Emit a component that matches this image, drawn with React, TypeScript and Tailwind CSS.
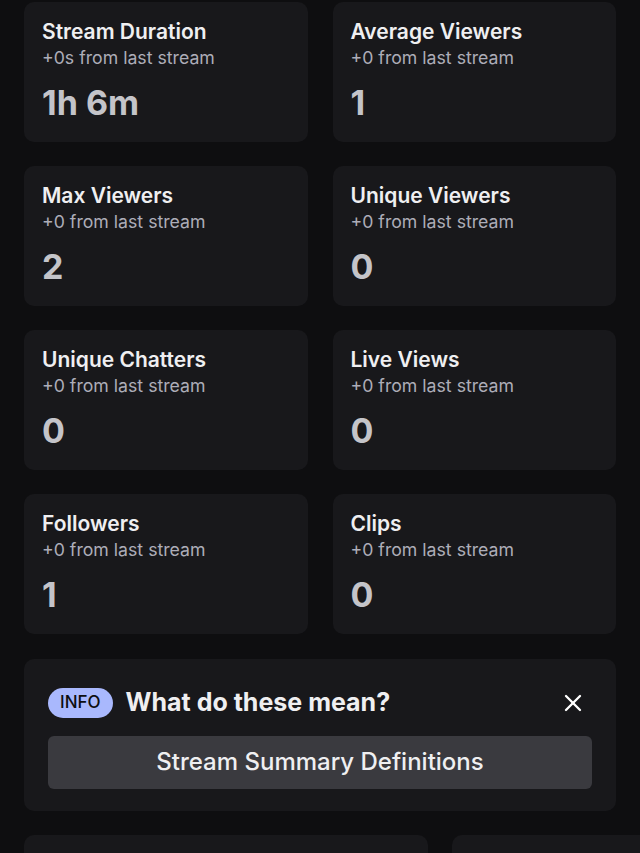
import { X } from "lucide-react";

interface Stat {
  label: string;
  delta: string;
  value: string;
}

const stats: Stat[] = [
  { label: "Stream Duration", delta: "+0s from last stream", value: "1h 6m" },
  { label: "Average Viewers", delta: "+0 from last stream", value: "1" },
  { label: "Max Viewers", delta: "+0 from last stream", value: "2" },
  { label: "Unique Viewers", delta: "+0 from last stream", value: "0" },
  { label: "Unique Chatters", delta: "+0 from last stream", value: "0" },
  { label: "Live Views", delta: "+0 from last stream", value: "0" },
  { label: "Followers", delta: "+0 from last stream", value: "1" },
  { label: "Clips", delta: "+0 from last stream", value: "0" },
];

function StatCard({ label, delta, value }: Stat) {
  return (
    <div className="h-[140px] rounded-[10px] bg-[#18181b] pl-[18px] pt-[16px]">
      <div className="text-[21px] leading-[28px] font-semibold text-[#efeff1]">{label}</div>
      <div className="text-[17.7px] leading-[24px] text-[#adadb8]">{delta}</div>
      <div className="mt-[13px] text-[34px] leading-[40px] font-bold text-[#c4c4c9]">{value}</div>
    </div>
  );
}

export default function App() {
  return (
    <div className="h-[853px] w-[640px] overflow-hidden bg-[#0e0e10] px-6 pt-[2px] font-['Inter',sans-serif]">
      {/* Stat grid */}
      <div className="grid grid-cols-2 gap-x-[25px] gap-y-6">
        {stats.map((s) => (
          <StatCard key={s.label} {...s} />
        ))}
      </div>

      {/* Info card */}
      <div className="mt-[25px] h-[152px] rounded-[10px] bg-[#18181b] px-6 pt-[25px]">
        <div className="flex items-center">
          <span className="flex h-[30px] items-center rounded-full bg-[#a9b8fd] px-[12px] text-[17px] font-medium text-[#0e0e10]">
            INFO
          </span>
          <span className="ml-[13px] text-[25px] font-bold text-[#efeff1]">What do these mean?</span>
          <X className="ml-auto mr-[5px] h-[28px] w-[28px] text-white" strokeWidth={2} />
        </div>
        <button className="mt-[14px] flex h-[53px] w-full items-center justify-center rounded-[6px] bg-[#3a3a3f] text-[24px] font-medium text-[#efeff1]">
          Stream Summary Definitions
        </button>
      </div>

      {/* Next row, partially visible */}
      <div className="mt-6 flex gap-6">
        <div className="h-[40px] w-[404px] rounded-[10px] bg-[#18181b]" />
        <div className="h-[40px] flex-1 -mr-6 rounded-l-[10px] bg-[#18181b]" />
      </div>
    </div>
  );
}
